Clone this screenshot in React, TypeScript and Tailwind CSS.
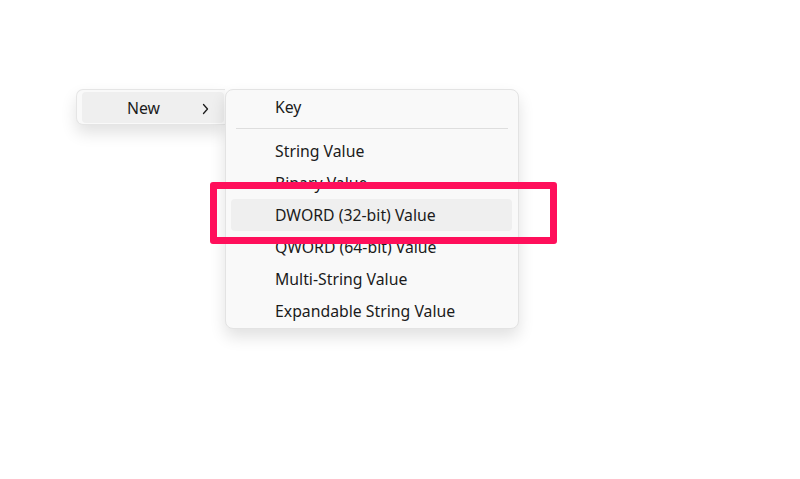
const items = [
  "String Value",
  "Binary Value",
  "DWORD (32-bit) Value",
  "QWORD (64-bit) Value",
  "Multi-String Value",
  "Expandable String Value",
];

function Chevron() {
  return (
    <svg width="7" height="12" viewBox="0 0 7 12" fill="none" className="text-[#1b1b1b]">
      <path d="M1.5 1.5 L5.5 6 L1.5 10.5" stroke="currentColor" strokeWidth="1.3" strokeLinecap="round" strokeLinejoin="round" />
    </svg>
  );
}

export default function App() {
  return (
    <div className="w-[800px] h-[479px] bg-white text-[#1b1b1b] font-['Noto_Sans',sans-serif] text-[15.8px] pt-[89px] pl-[76px]">
      <div className="flex items-start">
        {/* parent menu */}
        <div className="w-[149px] h-[36px] bg-[#f9f9f9] border border-[#e5e5e5] border-r-0 rounded-l-[7px] shadow-[0_8px_16px_rgba(0,0,0,0.12)] pl-[5px] pt-[2px]">
          <div className="h-[31px] w-[142px] rounded-[4px] bg-[#efefef] flex items-center pl-[45px] pr-[15px] pt-[2px]">
            <span className="flex-1 leading-none">New</span>
            <Chevron />
          </div>
        </div>

        {/* submenu */}
        <div className="relative w-[294px] bg-[#f9f9f9] border border-[#e3e3e3] rounded-[8px] shadow-[0_8px_16px_rgba(0,0,0,0.12)] px-[5px] pt-px pb-px">
          <div className="h-[32px] flex items-center pl-[44px] pt-[2px] leading-none">Key</div>
          <div className="mt-[5px] mb-[6px] mx-[5px] h-px bg-[#dedede]" />
          {items.map((label) => (
            <div
              key={label}
              className={
                label === "DWORD (32-bit) Value"
                  ? "h-[32px] flex items-center pl-[44px] pt-[2px] leading-none rounded-[4px] bg-[#efefef] mr-[1px]"
                  : "h-[32px] flex items-center pl-[44px] pt-[2px] leading-none"
              }
            >
              {label}
            </div>
          ))}

          {/* annotation box */}
          <div className="absolute left-[-16px] top-[92px] w-[347px] h-[62px] border-[7px] border-[#ff0f5b] rounded-[3px]" />
        </div>
      </div>
    </div>
  );
}
